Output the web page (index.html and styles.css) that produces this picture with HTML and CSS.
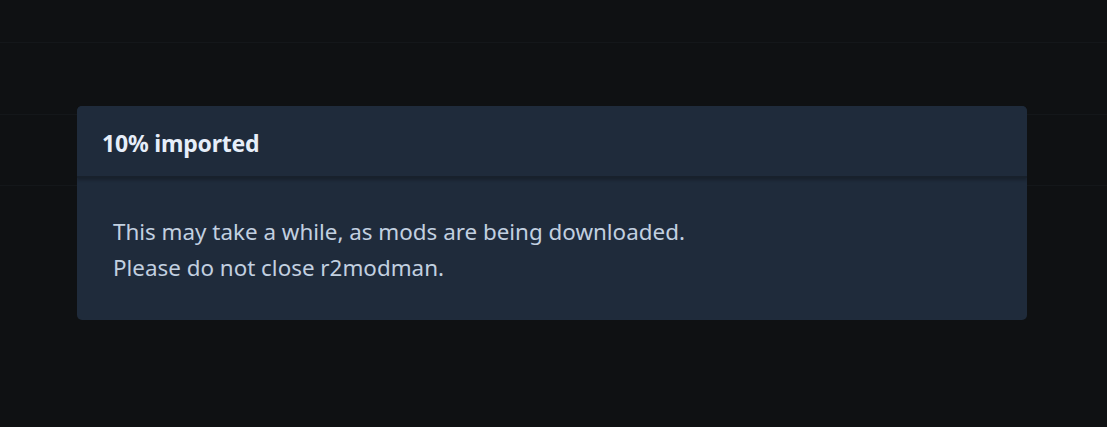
FILE: index.html
```html
<!DOCTYPE html>
<html>
<head>
<meta charset="utf-8">
<link rel="stylesheet" href="styles.css">
</head>
<body>
<div class="backdrop">
  <div class="bg-line l1"></div>
  <div class="bg-line l2"></div>
  <div class="bg-line l3"></div>
  <div class="modal-card">
    <header class="modal-head">
      <p class="modal-title">10% imported</p>
    </header>
    <section class="modal-body">
      <p>This may take a while, as mods are being downloaded.</p>
      <p>Please do not close r2modman.</p>
    </section>
  </div>
</div>
</body>
</html>
```

FILE: styles.css
```css
html, body {
  margin: 0;
  padding: 0;
  background: #0f1113;
  width: 1107px;
  height: 427px;
  overflow: hidden;
}
.backdrop {
  position: relative;
  width: 1107px;
  height: 427px;
  padding-top: 106px;
  box-sizing: border-box;
  font-family: "Noto Sans", "Open Sans", sans-serif;
}
.bg-line {
  position: absolute;
  left: 0;
  right: 0;
  height: 1px;
  background: #14171a;
}
.l1 { top: 42px; }
.l2 { top: 114px; }
.l3 { top: 185px; }
.modal-card {
  position: relative;
  margin-left: 77px;
  width: 950px;
  height: 214px;
  background: #1f2b3b;
  border-radius: 5px;
  overflow: hidden;
  display: flex;
  flex-direction: column;
}
.modal-head {
  height: 72px;
  box-sizing: border-box;
  padding: 0 25px;
  display: flex;
  align-items: center;
  background: #1f2b3b;
  border-bottom: 2px solid #18212c;
  box-shadow: 0 2px 3px rgba(0,0,0,0.25);
}
.modal-title {
  margin: 4px 0 0;
  font-size: 23px;
  font-weight: 700;
  color: #e6eef9;
  letter-spacing: -0.2px;
}
.modal-body {
  padding: 36px 36px 0;
  color: #c2d0e0;
  font-size: 22.4px;
  line-height: 36px;
}
.modal-body p {
  margin: 0;
}
```
